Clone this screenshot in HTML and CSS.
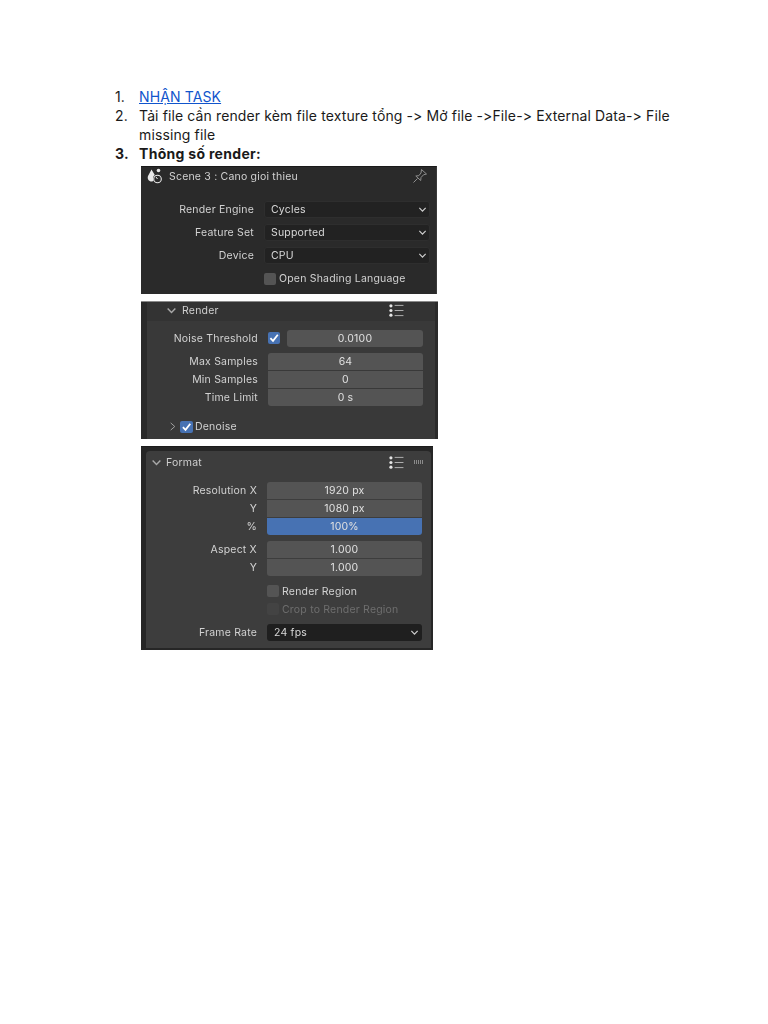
FILE: index.html
```html
<!DOCTYPE html>
<html lang="vi">
<head>
<meta charset="utf-8">
<title>Thông số render</title>
<link rel="stylesheet" href="styles.css">
</head>
<body>
<svg class="defs" width="0" height="0" aria-hidden="true">
  <symbol id="down" viewBox="0 0 10 10"><path d="M1.500 3.200 5 6.800l3.500-3.600" fill="none" stroke="currentColor" stroke-width="1.300"/></symbol>
  <symbol id="right" viewBox="0 0 10 10"><path d="M3 1 7.500 5 3 9" fill="none" stroke="currentColor" stroke-width="1.100"/></symbol>
  <symbol id="check" viewBox="0 0 12 12"><path d="M2.400 6.200 5 8.800l4.800-6" fill="none" stroke="#fff" stroke-width="1.800"/></symbol>
  <symbol id="list" viewBox="0 0 16 14"><g fill="#e6e6e6"><circle cx="2" cy="2" r="1.700"/><circle cx="2" cy="7" r="1.700"/><circle cx="2" cy="12" r="1.700"/></g><path d="M6 1.500h9.500M6 7h9.500M6 12.500h9.500" stroke="#b8b8b8" stroke-width="1"/></symbol>
</svg>
<main class="page">
  <ol class="steps">
    <li class="step"><span class="num">1.</span><span><a href="#task" class="link">NHẬN TASK</a></span></li>
    <li class="step"><span class="num">2.</span><span>Tải file cần render kèm file texture tổng -&gt; Mở file -&gt;File-&gt; External Data-&gt; File missing file</span></li>
    <li class="step strong"><span class="num">3.</span><span>Thông số render:</span></li>
  </ol>

  <section class="shot scene">
    <div class="scene-head">
      <svg class="scene-icon" viewBox="0 0 16 16" width="16" height="16"><path d="M4.500 1.500 1 8c-1 3 1 5.500 3.500 5.500 1 0 1.500-.3 2-.8C5.500 10.500 6 8 7.800 7Z" fill="#e8e8e8"/><circle cx="11.500" cy="2.500" r="1.800" fill="#e8e8e8"/><circle cx="10.500" cy="11" r="3.800" fill="none" stroke="#e8e8e8" stroke-width="1.100"/><path d="M10.500 11 9 9" stroke="#e8e8e8"/></svg>
      <span class="scene-title">Scene 3 : Cano gioi thieu</span>
      <svg class="pin" viewBox="0 0 16 16" width="16" height="16"><path d="M9.500 1.500 14.500 6l-3 .8-2.500 2.700-.3 3L3.800 8l3-.3L9 5Z M5.500 10.500 1.500 14.500" fill="none" stroke="#8f8f8f" stroke-width="1"/></svg>
    </div>
    <div class="scene-form">
      <div class="row"><span class="lbl">Render Engine</span><div class="select"><span>Cycles</span><svg class="chev"><use href="#down"/></svg></div></div>
      <div class="row"><span class="lbl">Feature Set</span><div class="select"><span>Supported</span><svg class="chev"><use href="#down"/></svg></div></div>
      <div class="row"><span class="lbl">Device</span><div class="select"><span>CPU</span><svg class="chev"><use href="#down"/></svg></div></div>
      <div class="row"><span></span><label class="check"><i class="box"></i>Open Shading Language</label></div>
    </div>
  </section>

  <section class="shot render">
    <div class="render-head">
      <svg class="fold"><use href="#down"/></svg><span class="title">Render</span>
      <svg class="list"><use href="#list"/></svg>
    </div>
    <div class="render-body">
      <div class="row2 noise"><span class="lbl">Noise Threshold</span><i class="box on"><svg><use href="#check"/></svg></i><div class="num-field solo">0.0100</div></div>
      <div class="row2"><span class="lbl">Max Samples</span><div class="num-field top">64</div></div>
      <div class="row2"><span class="lbl">Min Samples</span><div class="num-field mid">0</div></div>
      <div class="row2"><span class="lbl">Time Limit</span><div class="num-field bot">0 s</div></div>
      <div class="denoise"><svg class="unfold"><use href="#right"/></svg><i class="box on big"><svg><use href="#check"/></svg></i><span>Denoise</span></div>
    </div>
  </section>

  <section class="shot format">
    <div class="format-inner">
      <div class="format-head">
        <svg class="fold"><use href="#down"/></svg><span class="title">Format</span>
        <svg class="list"><use href="#list"/></svg>
        <span class="grip"></span>
      </div>
      <div class="row3"><span class="lbl">Resolution X</span><div class="num-field top">1920 px</div></div>
      <div class="row3"><span class="lbl">Y</span><div class="num-field mid">1080 px</div></div>
      <div class="row3"><span class="lbl">%</span><div class="num-field bot blue">100%</div></div>
      <div class="row3 group"><span class="lbl">Aspect X</span><div class="num-field top">1.000</div></div>
      <div class="row3"><span class="lbl">Y</span><div class="num-field bot">1.000</div></div>
      <div class="row3 region"><span></span><label class="check"><i class="box"></i>Render Region</label></div>
      <div class="row3 region-off"><span></span><label class="check off"><i class="box"></i>Crop to Render Region</label></div>
      <div class="row3 rate"><span class="lbl">Frame Rate</span><div class="select"><span>24 fps</span><svg class="chev"><use href="#down"/></svg></div></div>
    </div>
  </section>
</main>
</body>
</html>
```
FILE: styles.css
```css
* { box-sizing: border-box; }
html, body { margin: 0; background: #fff; }
.defs { position: absolute; }
.page {
  min-height: 1024px;
  padding: 87px 90px 0 115px;
  font-family: "Inter", "Noto Sans", sans-serif;
  font-size: 14px;
  line-height: 19px;
  letter-spacing: .12px;
  color: #1a1a1a;
  font-variant-ligatures: none;
  font-feature-settings: "calt" 0, "liga" 0;
}
.steps { list-style: none; margin: 0 0 3px; padding: 0; }
.step { display: grid; grid-template-columns: 24px 1fr; }
.strong { font-weight: 700; letter-spacing: .3px; }
.link { color: #1155cc; text-decoration: underline; }

.shot {
  margin-left: 26px;
  font-family: "Inter", "DejaVu Sans", sans-serif;
  font-size: 10.5px;
  line-height: 17px;
  letter-spacing: .2px;
  color: #d2d2d2;
  filter: blur(.3px);
}
.lbl { text-align: right; white-space: nowrap; }
.box { display: block; width: 12px; height: 12px; border-radius: 2px; background: #545454; flex: none; }
.box.on { background: #4772b3; }
.box svg { display: block; width: 100%; height: 100%; }
.select {
  display: flex; align-items: center; justify-content: space-between;
  height: 17px; padding: 0 3px 0 7px;
  background: #1f1f1f; border-radius: 3px; color: #d8d8d8;
}
.chev { width: 9px; height: 9px; color: #d0d0d0; }
.check { display: flex; align-items: center; gap: 3px; white-space: nowrap; }
.check.off { color: #6e6e6e; }
.check.off .box { background: #434343; }
.num-field { height: 17px; line-height: 17px; background: #545454; text-align: center; color: #e0e0e0; }
.top { border-radius: 3px 3px 0 0; margin-bottom: 1px; }
.mid { margin-bottom: 1px; }
.bot { border-radius: 0 0 3px 3px; }
.solo { border-radius: 3px; }
.blue { background: #4772b3; }
.title { color: #cfcfcf; }
.fold { width: 11px; height: 11px; color: #a8a8a8; flex: none; }
.list { width: 15px; height: 13px; flex: none; }

/* Scene panel */
.scene { width: 296px; height: 128px; background: #2a2a2a; border-top: 1px solid #1a1a1a; border-right: 1px solid #3a3a3a; }
.scene-head { display: flex; align-items: center; height: 20px; padding: 0 8px 2px 6px; }
.scene-icon { flex: none; margin-right: 6px; }
.scene-title { flex: 1; }
.pin { flex: none; }
.scene-form { padding: 14px 6px 0 0; }
.scene .select { background: #222; box-shadow: inset 0 0 0 1px #2e2e2e; }
.row { display: grid; grid-template-columns: 113px 1fr; column-gap: 10px; height: 23px; align-items: start; }

/* Render panel */
.render { width: 297px; height: 138px; margin-top: 7px; background: #2a2a2a; border-top: 1px solid #8a8a8a; }
.render-head {
  display: flex; align-items: center; height: 19px; margin-left: 6px; margin-right: 3px;
  padding: 0 31px 2px 19px; background: #333;
}
.render-head .title { flex: 1; margin-left: 5px; }
.render-body { height: 118px; margin: 0 3px 0 6px; padding-top: 8px; background: #393939; }
.row2 { display: grid; grid-template-columns: 111px 155px; column-gap: 10px; }
.noise { grid-template-columns: 121px 19px 136px; column-gap: 0; margin-bottom: 6px; align-items: center; height: 18px; }
.noise .lbl { padding-right: 10px; }
.denoise { display: flex; align-items: center; margin: 12px 0 0 21px; gap: 2px; }
.unfold { width: 9px; height: 11px; color: #a0a0a0; }
.big { width: 13px; height: 12px; margin-left: 1px; }

/* Format panel */
.format { width: 292px; height: 204px; margin-top: 7px; padding: 4px 2px 0 5px; background: #262626; border-top: 1px solid #1c1c1c; }
.format-inner { height: 197px; background: #3d3d3d; border-radius: 4px 4px 0 0; padding-top: 4px; }
.format-head { display: flex; align-items: center; height: 16px; margin-bottom: 11px; padding: 0 7px 2px 5px; gap: 3px; }
.format-head .title { flex: 1; margin-left: 1px; }
.grip { width: 10px; height: 4px; margin-left: 7px; background: repeating-linear-gradient(90deg, #8a8a8a 0 1px, transparent 1px 2px); }
.row3 { display: grid; grid-template-columns: 111px 155px; column-gap: 10px; }
.group { margin-top: 6px; }
.region { margin-top: 6px; height: 18px; align-items: center; }
.region-off { height: 18px; align-items: center; }
.rate { margin-top: 6px; }
```
